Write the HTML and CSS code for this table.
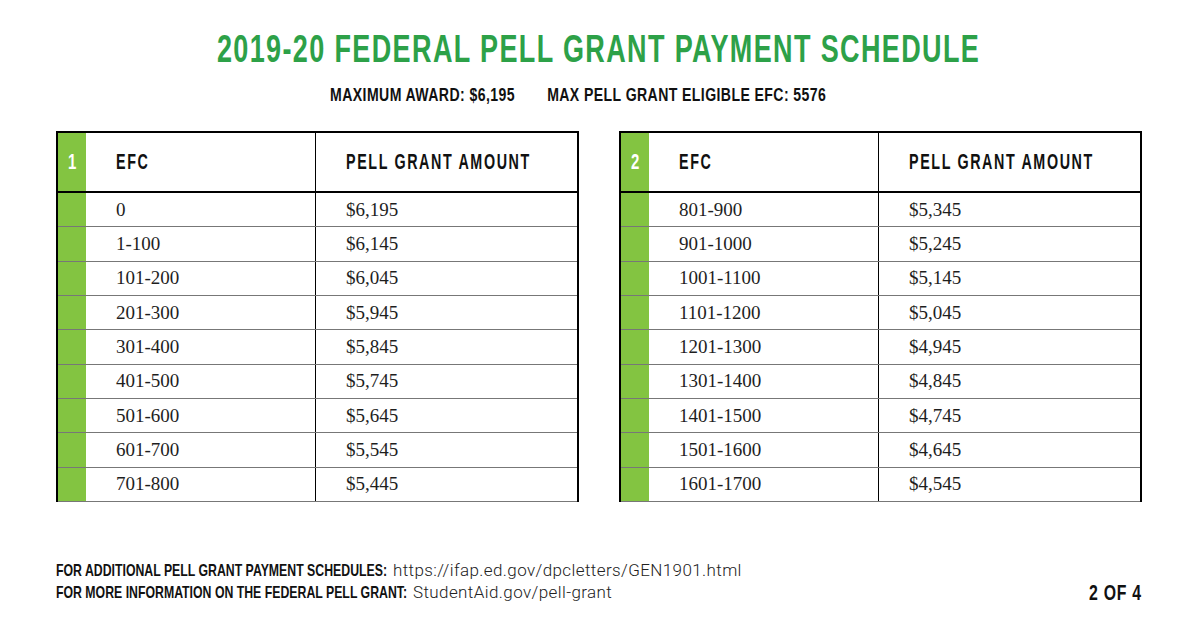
FILE: index.html
```html
<!DOCTYPE html>
<html>
<head>
<meta charset="utf-8">
<link rel="stylesheet" href="styles.css">
</head>
<body>
<div class="page">
  <h1 class="title"><span class="sq">2019-20 FEDERAL PELL GRANT PAYMENT SCHEDULE</span></h1>
  <div class="subtitle"><span class="sq"><span>MAXIMUM AWARD: $6,195</span><span class="gap"></span><span>MAX PELL GRANT ELIGIBLE EFC: 5576</span></span></div>
  <div class="tables">
    <div class="table">
      <div class="row head"><div class="num"><span class="sq">1</span></div><div class="cell c1"><span class="sq">EFC</span></div><div class="cell c2"><span class="sq">PELL GRANT AMOUNT</span></div></div>
      <div class="row"><div class="num"></div><div class="cell c1">0</div><div class="cell c2">$6,195</div></div>
      <div class="row"><div class="num"></div><div class="cell c1">1-100</div><div class="cell c2">$6,145</div></div>
      <div class="row"><div class="num"></div><div class="cell c1">101-200</div><div class="cell c2">$6,045</div></div>
      <div class="row"><div class="num"></div><div class="cell c1">201-300</div><div class="cell c2">$5,945</div></div>
      <div class="row"><div class="num"></div><div class="cell c1">301-400</div><div class="cell c2">$5,845</div></div>
      <div class="row"><div class="num"></div><div class="cell c1">401-500</div><div class="cell c2">$5,745</div></div>
      <div class="row"><div class="num"></div><div class="cell c1">501-600</div><div class="cell c2">$5,645</div></div>
      <div class="row"><div class="num"></div><div class="cell c1">601-700</div><div class="cell c2">$5,545</div></div>
      <div class="row"><div class="num"></div><div class="cell c1">701-800</div><div class="cell c2">$5,445</div></div>
    </div>
    <div class="table">
      <div class="row head"><div class="num"><span class="sq">2</span></div><div class="cell c1"><span class="sq">EFC</span></div><div class="cell c2"><span class="sq">PELL GRANT AMOUNT</span></div></div>
      <div class="row"><div class="num"></div><div class="cell c1">801-900</div><div class="cell c2">$5,345</div></div>
      <div class="row"><div class="num"></div><div class="cell c1">901-1000</div><div class="cell c2">$5,245</div></div>
      <div class="row"><div class="num"></div><div class="cell c1">1001-1100</div><div class="cell c2">$5,145</div></div>
      <div class="row"><div class="num"></div><div class="cell c1">1101-1200</div><div class="cell c2">$5,045</div></div>
      <div class="row"><div class="num"></div><div class="cell c1">1201-1300</div><div class="cell c2">$4,945</div></div>
      <div class="row"><div class="num"></div><div class="cell c1">1301-1400</div><div class="cell c2">$4,845</div></div>
      <div class="row"><div class="num"></div><div class="cell c1">1401-1500</div><div class="cell c2">$4,745</div></div>
      <div class="row"><div class="num"></div><div class="cell c1">1501-1600</div><div class="cell c2">$4,645</div></div>
      <div class="row"><div class="num"></div><div class="cell c1">1601-1700</div><div class="cell c2">$4,545</div></div>
    </div>
  </div>
  <div class="footer">
    <div class="notes">
      <p class="note"><span class="label label-1"><span class="sq">FOR ADDITIONAL PELL GRANT PAYMENT SCHEDULES:</span></span><span class="url">https://ifap.ed.gov/dpcletters/GEN1901.html</span></p>
      <p class="note"><span class="label label-2"><span class="sq">FOR MORE INFORMATION ON THE FEDERAL PELL GRANT:</span></span><span class="url">StudentAid.gov/pell-grant</span></p>
    </div>
    <div class="pager"><span class="sq">2 OF 4</span></div>
  </div>
</div>
</body>
</html>
```

FILE: styles.css
```css
html, body {
  margin: 0;
  padding: 0;
  background: #fff;
}
.page {
  width: 1200px;
  height: 628px;
  box-sizing: border-box;
  padding: 0 58px 0 56px;
  font-family: "Liberation Sans", Arial, sans-serif;
  color: #111;
  overflow: hidden;
}
.sq {
  display: inline-block;
  white-space: nowrap;
  transform-origin: left center;
}
.title {
  margin: 0;
  padding-top: 29px;
  display: flex;
  justify-content: center;
  font-size: 39px;
  line-height: 40px;
  font-weight: bold;
  color: #2da148;
  letter-spacing: 2px;
  white-space: nowrap;
}
.title .sq {
  flex-shrink: 0;
  transform: scaleX(0.692);
  transform-origin: center center;
}
.subtitle {
  margin-top: 15px;
  padding-right: 42px;
  display: flex;
  justify-content: center;
  font-size: 17.5px;
  line-height: 22px;
  font-weight: bold;
  letter-spacing: 0.5px;
  white-space: nowrap;
}
.subtitle .sq {
  flex-shrink: 0;
  transform: scaleX(0.805);
  transform-origin: center center;
}
.subtitle .gap {
  display: inline-block;
  width: 40px;
}
.tables {
  display: flex;
  gap: 40px;
  margin-top: 25px;
}
.table {
  width: 523px;
  border: 2px solid #000;
  border-bottom: none;
  box-sizing: border-box;
}
.row {
  display: grid;
  grid-template-columns: 28px 230px 1fr;
  height: 34.33px;
  box-sizing: border-box;
  border-bottom: 1px solid #777;
}
.row.head {
  height: 60px;
  border-bottom: 2px solid #000;
}
.num {
  background: #83c441;
  color: #fff;
  display: flex;
  align-items: center;
  justify-content: center;
  font-weight: bold;
  font-size: 22px;
}
.num .sq {
  transform: scaleX(0.68);
  transform-origin: center center;
}
.cell {
  display: flex;
  align-items: center;
  padding-left: 30px;
  font-family: "Liberation Serif", serif;
  font-size: 19px;
  color: #1e1e1e;
}
.c1 {
  border-right: 1px solid #000;
}
.head .cell {
  font-family: "Liberation Sans", Arial, sans-serif;
  font-weight: bold;
  font-size: 22px;
  letter-spacing: 2.5px;
  color: #111;
}
.head .cell .sq {
  transform: scaleX(0.65);
}
.footer {
  display: flex;
  justify-content: space-between;
  align-items: flex-end;
  margin-top: 57px;
}
.note {
  margin: 0;
  display: flex;
  align-items: baseline;
  gap: 5px;
  font-size: 16.5px;
  line-height: 22px;
  white-space: nowrap;
}
.label {
  display: inline-block;
  font-weight: bold;
  color: #111;
}
.label .sq {
  transform: scaleX(0.745);
}
.label-1 {
  width: 332px;
}
.label-2 {
  width: 352px;
}
.url {
  font-family: "Roboto", "Liberation Sans", sans-serif;
  font-weight: 300;
  font-size: 17px;
  letter-spacing: 0.4px;
  color: #222;
}
.pager {
  font-size: 22px;
  font-weight: bold;
  line-height: 20px;
  letter-spacing: 1px;
  width: 53px;
}
.pager .sq {
  transform: scaleX(0.72);
}
```
